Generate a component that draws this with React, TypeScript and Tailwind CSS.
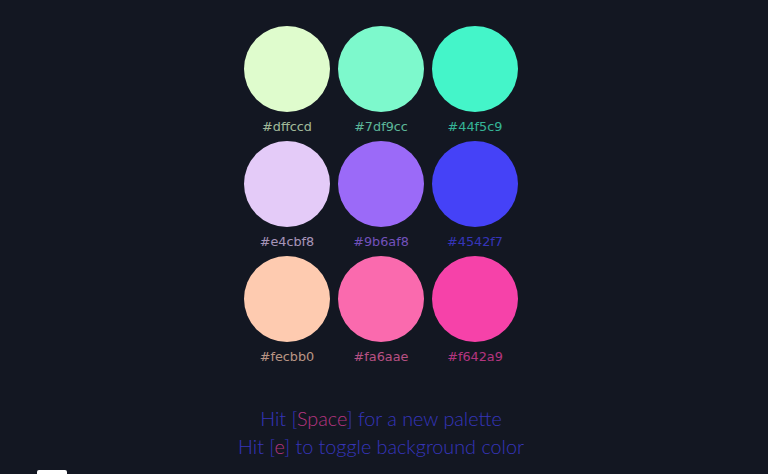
const palette = [
  "#dffccd",
  "#7df9cc",
  "#44f5c9",
  "#e4cbf8",
  "#9b6af8",
  "#4542f7",
  "#fecbb0",
  "#fa6aae",
  "#f642a9",
];

export default function App() {
  return (
    <div className="min-h-screen bg-[#131722] flex flex-col items-center pr-[6px] pt-[26px] font-['DejaVu_Sans',sans-serif]">
      <div className="grid grid-cols-3 gap-x-2">
        {palette.map((c) => (
          <div key={c} className="flex flex-col items-center">
            <div className="w-[86px] h-[86px] rounded-full" style={{ backgroundColor: c }} />
            <span className="mt-[6px] mb-[5px] h-[18px] leading-[18px] text-[12.8px] opacity-70" style={{ color: c }}>
              {c}
            </span>
          </div>
        ))}
      </div>

      <div className="mt-[33px] text-center text-[19.8px] leading-[28px] font-light text-[#4542f7] opacity-70 font-['Lato','Noto_Sans',sans-serif]">
        <p>
          Hit [<span className="text-[#f642a9]">Space</span>] for a new palette
        </p>
        <p>
          Hit [<span className="text-[#f642a9]">e</span>] to toggle background color
        </p>
      </div>

      <div className="self-start ml-[37px] mt-[10px] w-[30px] h-[20px] bg-white rounded-t-[2px]" />
    </div>
  );
}
